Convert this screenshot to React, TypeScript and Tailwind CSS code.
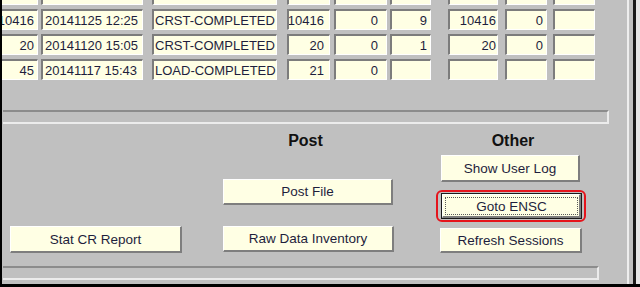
const rows: string[][] = [
  ['', '', '', '', '', '', '', '', ''],
  ['10416', '20141125 12:25', 'CRST-COMPLETED', '10416', '0', '9', '10416', '0', ''],
  ['20', '20141120 15:05', 'CRST-COMPLETED', '20', '0', '1', '20', '0', ''],
  ['45', '20141117 15:43', 'LOAD-COMPLETED', '21', '0', '', '', '', ''],
]

// cell placement: margin-left, width, alignment/padding
const cols = [
  'ml-[-14px] w-[50px] justify-end pr-[3px]',
  'ml-[3px] w-[102px] justify-start pl-[2px]',
  'ml-[9px] w-[125px] justify-start pl-[1px]',
  'ml-[10px] w-[43px] justify-end pr-[5px]',
  'ml-[4px] w-[53px] justify-end pr-[8px]',
  'ml-[3px] w-[41px] justify-end pr-[3px]',
  'ml-[17px] w-[50px] justify-end pr-[1px]',
  'ml-[7px] w-[42px] justify-end pr-[3px]',
  'ml-[6px] w-[42px] justify-end pr-[3px]',
]

function Cell({ value, cls }: { value: string; cls: string }) {
  return (
    <div
      className={`${cls} shrink-0 h-[21px] flex items-center bg-[#ffffe4] border-t-2 border-l-2 border-t-[#7c7c7c] border-l-[#7c7c7c] border-r border-b border-r-white border-b-white overflow-hidden whitespace-nowrap pt-[1px]`}
    >
      {value}
    </div>
  )
}

function Btn({ label, className }: { label: string; className: string }) {
  return (
    <button
      className={`${className} shrink-0 flex items-center justify-center pt-[2px] bg-[#ffffe4] border-t border-l border-t-white border-l-white border-r-2 border-b-2 border-r-[#7e7e7e] border-b-[#7e7e7e] text-[13.5px] text-[#1e1e3c]`}
    >
      {label}
    </button>
  )
}

function Groove({ className }: { className: string }) {
  return (
    <div
      className={`${className} h-[14px] shrink-0 border-t-2 border-t-[#8c8c8c] border-b-2 border-b-[#ececec] border-r-2 border-r-[#ececec]`}
    />
  )
}

export default function App() {
  return (
    <div className="w-[640px] h-[287px] overflow-hidden bg-[#c0c0c0] flex border-l-2 border-l-black border-b-[3px] border-b-black font-['Liberation_Sans',Arial,sans-serif] text-[13px] text-[#1e1e3c]">
      <div className="w-[625px] shrink-0 flex flex-col">
        <div className="mt-[-16px] flex flex-col gap-[4px]">
          {rows.map((r, i) => (
            <div key={i} className="flex">
              {r.map((v, j) => (
                <Cell key={j} value={v} cls={cols[j]} />
              ))}
            </div>
          ))}
        </div>

        <Groove className="mt-[30px] ml-[1px] w-[606px]" />

        <div className="h-[142px] shrink-0 flex">
          <div className="ml-[8px] w-[172px] shrink-0 flex flex-col">
            <Btn label="Stat CR Report" className="mt-[102px] w-[172px] h-[27px]" />
          </div>

          <div className="ml-[41px] w-[171px] shrink-0 flex flex-col">
            <div className="mt-[8px] h-[18px] leading-[18px] text-center pr-[6px] text-[16px] font-bold text-[#111]">
              Post
            </div>
            <Btn label="Post File" className="mt-[29px] w-[170px] h-[26px]" />
            <Btn label="Raw Data Inventory" className="mt-[21px] w-[171px] h-[26px]" />
          </div>

          <div className="ml-[46px] w-[142px] shrink-0 flex flex-col">
            <div className="mt-[8px] h-[18px] leading-[18px] text-center pl-[4px] text-[16px] font-bold text-[#111]">
              Other
            </div>
            <Btn label="Show User Log" className="mt-[5px] ml-[1px] w-[139px] h-[27px]" />
            <button className="relative mt-[11px] ml-[1px] w-[141px] h-[26px] shrink-0 flex items-center justify-center pt-[2px] bg-[#ffffe4] border border-[#1a1a1a] text-[13.5px] text-[#1e1e3c]">
              <span className="absolute inset-0 border-t border-l border-t-white border-l-white border-r-2 border-b-2 border-r-[#7e7e7e] border-b-[#7e7e7e]" />
              <span className="absolute inset-[3px] border border-dotted border-[#5a5a5a]" />
              <span className="relative">Goto ENSC</span>
              <span className="absolute -left-[6px] -right-[5px] -top-[4px] -bottom-[4px] border-2 border-[#e5141c] rounded-[6px]" />
            </button>
            <Btn label="Refresh Sessions" className="mt-[9px] w-[142px] h-[25px]" />
          </div>
        </div>

        <Groove className="ml-[1px] w-[596px]" />
      </div>

      <div className="w-[2px] shrink-0 bg-[#eeeeee]" />
      <div className="w-[4px] shrink-0 bg-[#c0c0c0]" />
      <div className="w-[3px] shrink-0 bg-[#1a1a1a]" />
      <div className="w-[4px] shrink-0 bg-[#e6e6e6]" />
    </div>
  )
}
